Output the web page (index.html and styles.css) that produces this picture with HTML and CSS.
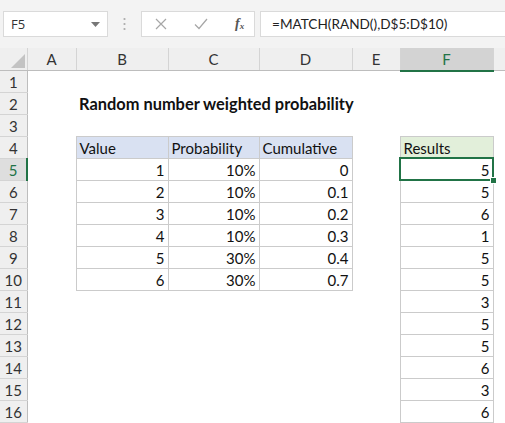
FILE: index.html
```html
<!DOCTYPE html>
<html lang="en">

<head>
    <meta charset="UTF-8">
    <title>Random number weighted probability</title>
    <link rel="stylesheet" href="styles.css">
</head>

<body>

    <div class="toolbar">
        <div class="namebox">
            <span>F5</span>
            <svg width="9" height="5" viewBox="0 0 9 5"><path d="M0 0h9L4.5 5z" fill="#777"/></svg>
        </div>
        <div class="grip">
            <svg width="3" height="14" viewBox="0 0 3 14"><circle cx="1.5" cy="2" r="1.1" fill="#aaa"/><circle cx="1.5" cy="7" r="1.1" fill="#aaa"/><circle cx="1.5" cy="12" r="1.1" fill="#aaa"/></svg>
        </div>
        <div class="fxbox">
            <svg class="btn" width="12" height="12" viewBox="0 0 12 12"><path d="M1 1l10 10M11 1L1 11" stroke="#a6a6a6" stroke-width="1.2" fill="none"/></svg>
            <svg class="btn" width="14" height="12" viewBox="0 0 14 12"><path d="M1 6.5l4 4L13 1" stroke="#a6a6a6" stroke-width="1.2" fill="none"/></svg>
            <span class="fx">f<sub>x</sub></span>
        </div>
        <div class="formula">=MATCH(RAND(),D$5:D$10)</div>
    </div>

    <table class="sheet">
        <colgroup>
            <col style="width:27px">
            <col style="width:49px">
            <col style="width:92px">
            <col style="width:91px">
            <col style="width:93px">
            <col style="width:48px">
            <col style="width:93px">
            <col style="width:12px">
        </colgroup>
        <thead>
            <tr>
                <th class="corner"><svg width="14" height="14" viewBox="0 0 14 14"><path d="M14 0v14H0z" fill="#c3c3c3"/></svg></th>
                <th>A</th>
                <th>B</th>
                <th>C</th>
                <th>D</th>
                <th>E</th>
                <th class="active">F</th>
                <th></th>
            </tr>
        </thead>
        <tbody>
            <tr><th>1</th><td></td><td></td><td></td><td></td><td></td><td></td><td></td></tr>
            <tr><th>2</th><td></td><td class="title">Random number weighted probability</td><td></td><td></td><td></td><td></td><td></td></tr>
            <tr><th>3</th><td></td><td></td><td></td><td></td><td></td><td></td><td></td></tr>
            <tr><th>4</th><td></td><td class="box head">Value</td><td class="box head">Probability</td><td class="box head">Cumulative</td><td></td><td class="box res-head">Results</td><td></td></tr>
            <tr><th class="active">5</th><td></td><td class="box num">1</td><td class="box num">10%</td><td class="box num">0</td><td></td><td class="box num selected">5</td><td></td></tr>
            <tr><th>6</th><td></td><td class="box num">2</td><td class="box num">10%</td><td class="box num">0.1</td><td></td><td class="box num">5</td><td></td></tr>
            <tr><th>7</th><td></td><td class="box num">3</td><td class="box num">10%</td><td class="box num">0.2</td><td></td><td class="box num">6</td><td></td></tr>
            <tr><th>8</th><td></td><td class="box num">4</td><td class="box num">10%</td><td class="box num">0.3</td><td></td><td class="box num">1</td><td></td></tr>
            <tr><th>9</th><td></td><td class="box num">5</td><td class="box num">30%</td><td class="box num">0.4</td><td></td><td class="box num">5</td><td></td></tr>
            <tr><th>10</th><td></td><td class="box num">6</td><td class="box num">30%</td><td class="box num">0.7</td><td></td><td class="box num">5</td><td></td></tr>
            <tr><th>11</th><td></td><td></td><td></td><td></td><td></td><td class="box num">3</td><td></td></tr>
            <tr><th>12</th><td></td><td></td><td></td><td></td><td></td><td class="box num">5</td><td></td></tr>
            <tr><th>13</th><td></td><td></td><td></td><td></td><td></td><td class="box num">5</td><td></td></tr>
            <tr><th>14</th><td></td><td></td><td></td><td></td><td></td><td class="box num">6</td><td></td></tr>
            <tr><th>15</th><td></td><td></td><td></td><td></td><td></td><td class="box num">3</td><td></td></tr>
            <tr><th>16</th><td></td><td></td><td></td><td></td><td></td><td class="box num">6</td><td></td></tr>
        </tbody>
    </table>

</body>

</html>
```

FILE: styles.css
```css
body {
    margin: 0;
    width: 505px;
    height: 423px;
    overflow: hidden;
    font-family: Lato, "Liberation Sans", sans-serif;
    background: #fff;
    color: #111;
}

.toolbar {
    display: flex;
    align-items: flex-start;
    height: 48px;
    padding-top: 11px;
    box-sizing: border-box;
    background: #f3f3f3;
}

.namebox {
    margin-left: 3px;
    width: 105px;
    height: 26px;
    box-sizing: border-box;
    background: #fff;
    border: 1px solid #dadada;
    display: flex;
    align-items: center;
    justify-content: space-between;
    padding: 0 7px 0 7px;
    font-family: "Open Sans", sans-serif;
    font-size: 13px;
    color: #333;
}

.grip {
    width: 33px;
    height: 26px;
    display: flex;
    align-items: center;
    justify-content: center;
}

.fxbox {
    width: 114px;
    height: 26px;
    box-sizing: border-box;
    background: #fff;
    border: 1px solid #dadada;
    display: flex;
    align-items: center;
    padding-left: 13px;
}

.fxbox .btn {
    margin-right: 27px;
}

.fx {
    font-family: "Liberation Serif", serif;
    font-style: italic;
    font-weight: bold;
    font-size: 14px;
    color: #555;
}

.fx sub {
    font-size: 9px;
    vertical-align: -1px;
}

.formula {
    flex: 1;
    margin-left: 5px;
    height: 26px;
    box-sizing: border-box;
    background: #fff;
    border: 1px solid #dadada;
    border-right: none;
    padding-left: 11px;
    font-size: 13.6px;
    line-height: 24px;
    color: #222;
}

.sheet {
    table-layout: fixed;
    width: 505px;
    border-collapse: collapse;
    font-size: 15px;
}

.sheet thead th {
    height: 20px;
    padding: 0;
    background: #efefef;
    border-right: 1px solid #d4d4d4;
    border-bottom: 1px solid #bdbdbd;
    font-weight: normal;
    color: #333;
    text-align: center;
}

.sheet thead th.corner {
    text-align: right;
    vertical-align: bottom;
    padding: 0 2px 2px 0;
    line-height: 0;
}

.sheet thead th.active {
    background: #d3d3d3;
    color: #217346;
    border-bottom: 2px solid #217346;
}

.sheet tbody tr {
    height: 22px;
}

.sheet tbody th {
    padding: 0;
    background: #efefef;
    border-bottom: 1px solid #d4d4d4;
    border-right: 1px solid #bdbdbd;
    font-weight: normal;
    color: #333;
    text-align: center;
}

.sheet tbody th.active {
    background: #dedede;
    color: #217346;
    border-right: 2px solid #217346;
}

.sheet td {
    padding: 0 3px;
    white-space: nowrap;
    overflow: visible;
    line-height: 20px;
}

.title {
    font-weight: bold;
    font-size: 16.4px;
}

.box {
    border: 1px solid #cbcbcb;
}

.head {
    background: #d9e1f2;
}

.res-head {
    background: #e2efda;
}

.num {
    text-align: right;
}

.selected {
    position: relative;
}

.selected::after {
    content: "";
    position: absolute;
    left: -2px;
    top: -2px;
    right: -1px;
    bottom: -1px;
    border: 2px solid #217346;
}

.selected::before {
    content: "";
    position: absolute;
    right: -4px;
    bottom: -4px;
    width: 5px;
    height: 5px;
    background: #217346;
    border: 1px solid #fff;
    z-index: 1;
}
```
